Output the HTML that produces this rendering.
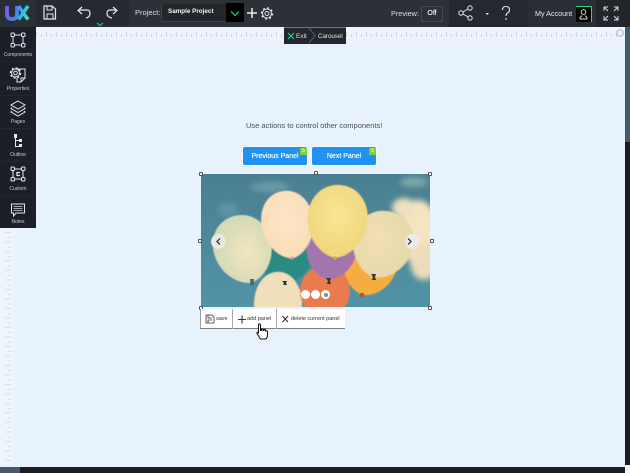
<!DOCTYPE html>
<html>
<head>
<meta charset="utf-8">
<style>
html,body{margin:0;padding:0;width:630px;height:473px;overflow:hidden;background:#e8f2fc;font-family:"Liberation Sans",sans-serif}
.a{position:absolute}
#root{position:relative;width:630px;height:473px;overflow:hidden}
.t{position:absolute;white-space:nowrap}
.side{position:absolute;left:0;width:36px;height:33px;color:#c8ccd0;font-size:5px;text-align:center;border-bottom:1px solid #23272d}
.side span{position:absolute;left:0;right:0;bottom:3px}
.btn{position:absolute;top:147px;height:18px;background:#2093f2;border-radius:2px;color:#fff;font-size:7px;line-height:19px;text-align:center;box-shadow:0 0 0 1px #f4f9ff;text-shadow:0 0 .4px #fff}
.tag{position:absolute;right:0;top:1px;width:7px;height:7px;background:#7fd13b;color:#fff;font-size:5px;line-height:7px;text-shadow:none}
.h{position:absolute;width:2px;height:2px;border:1px solid #555;background:#f4f8fc;border-radius:1px}
</style>
</head>
<body>
<div id="root">
<!-- top bar -->
<div class="a" style="left:0;top:0;width:630px;height:27px;background:#2c3138"></div>
<div class="a" style="left:0;top:0;width:36px;height:27px;background:#2a2f36"></div>
<div class="a" style="left:36px;top:0;width:93px;height:25px;background:#262a30"></div>
<div class="a" style="left:449px;top:0;width:79px;height:27px;background:#25292f"></div>
<div class="a" style="left:528px;top:0;width:68px;height:27px;background:#2a2e35"></div>
<div class="a" style="left:596px;top:0;width:34px;height:27px;background:#22262b"></div>
<svg class="a" style="left:0;top:0" width="630" height="27" fill="none">
 <defs><linearGradient id="ux" gradientUnits="userSpaceOnUse" x1="5" x2="30" y1="8" y2="16"><stop offset="0" stop-color="#8a55e6"/><stop offset=".45" stop-color="#4a7fe8"/><stop offset=".75" stop-color="#35c4e0"/><stop offset="1" stop-color="#3be6a4"/></linearGradient></defs>
 <path d="M7 6V14Q7 19 12 19Q17 19 17 14V6" stroke="url(#ux)" stroke-width="3.800"/>
 <path d="M18.500 6L28 19.500M28 6L18.500 19.500" stroke="url(#ux)" stroke-width="3.600"/>
 <path d="M44 6H52L55.500 9V19H44Z" stroke="#e4e6e8" stroke-width="1.200"/><path d="M47 6V10H52V6M47 19V14H53V19" stroke="#e4e6e8"/>
 <path d="M79 10H87Q90 10 90 13.500Q90 17 86 18" stroke="#e4e6e8" stroke-width="1.200"/><path d="M82 7L78 10.500L82 14" stroke="#e4e6e8" stroke-width="1.200"/>
 <path d="M116 10H110Q107 10 107 13.500Q107 17 112 18" stroke="#e4e6e8" stroke-width="1.200"/><path d="M113 7L117 10.500L113 14" stroke="#e4e6e8" stroke-width="1.200"/>
 <path d="M97 23L100 25.500L103 23" stroke="#1fd18a" stroke-width="1.100"/>
 <path d="M247 13H257M252 8V18" stroke="#eceeef" stroke-width="1.500"/>
 <circle cx="267" cy="13.500" r="2" stroke="#e0e2e4"/><circle cx="267" cy="13.500" r="4.500" stroke="#e0e2e4"/><circle cx="267" cy="13.500" r="5.500" stroke="#e0e2e4" stroke-width="1.400" stroke-dasharray="2 2.300"/>
 <circle cx="461" cy="13" r="2.200" stroke="#e8eaec"/><circle cx="470" cy="8" r="2.200" stroke="#e8eaec"/><circle cx="470" cy="18" r="2.200" stroke="#e8eaec"/><path d="M463 12L468 9M463 14L468 17" stroke="#e8eaec"/>
 <path d="M485.500 13H489L487.200 15Z" fill="#e8eaec"/>
 <path d="M502.500 10Q502.500 6.500 506 6.500Q509.500 6.500 509.500 10Q509.500 12 507.500 13Q506 14 506 16M506 18V20" stroke="#e4e6e8" stroke-width="1.100"/>
 <path d="M604 7V11M604 7H608M604 7L608 11M614 7H618V11M618 7L614 11M604 16V20H608M604 20L608 16M618 16V20H614M618 20L614 16" stroke="#dfe2e4" stroke-width=".9"/>
</svg>
<div class="t" style="left:135px;top:8px;font-size:7.500px;color:#dcdfe2">Project:</div>
<div class="a" style="left:161px;top:4px;width:66px;height:17px;background:#23272c;border-left:1px solid #3c4248;border-bottom:1px solid #3c4248"></div>
<div class="t" style="left:168px;top:8px;font-size:6.300px;font-weight:bold;color:#f2f2f2">Sample Project</div>
<div class="a" style="left:226px;top:3px;width:18px;height:19px;background:#000"></div>
<svg class="a" style="left:226px;top:3px" width="18" height="19" fill="none"><path d="M5 8.500L9 12.500L13 8.500" stroke="#14d98a" stroke-width="1.200"/></svg>
<div class="t" style="left:391px;top:9px;font-size:7.300px;color:#dcdfe2">Preview:</div>
<div class="a" style="left:421px;top:6px;width:20px;height:14px;border:1px solid #41474e;border-radius:2px;color:#e8e8e8;font-size:7px;line-height:14px;text-align:center;text-shadow:0 0 .4px #fff">Off</div>
<div class="t" style="left:535px;top:9px;font-size:7.200px;color:#e8e8e8">My Account</div>
<div class="a" style="left:576px;top:6px;width:15px;height:15px;background:#000;border-top:1px solid #14e08e;border-right:1px solid #14e08e"></div>
<svg class="a" style="left:576px;top:6px" width="16" height="16" fill="none"><circle cx="7.500" cy="6" r="2.300" stroke="#e5e5e5" stroke-width=".9"/><path d="M4 13V11.500L6 9.500M11 13V11.500L9 9.500M4 13H11" stroke="#e5e5e5" stroke-width=".9"/></svg>

<!-- ruler top -->
<div class="a" style="left:36px;top:27px;width:589px;height:12px;background:#edf4fb"></div>
<div class="a" style="left:36px;top:34px;width:589px;height:3px;background:repeating-linear-gradient(90deg,#d0d6db 0 1px,transparent 1px 5px)"></div>
<div class="a" style="left:36px;top:32px;width:589px;height:2px;background:repeating-linear-gradient(90deg,#d0d6db 0 1px,transparent 1px 10px)"></div>
<svg class="a" style="left:615px;top:28px" width="10" height="10"><circle cx="5" cy="5" r="3.200" fill="none" stroke="#bfc4c9" stroke-width="2" stroke-dasharray="1.500 .6"/></svg>
<!-- ruler left -->
<div class="a" style="left:0;top:229px;width:14px;height:236px;background:#eef5fc"></div>
<div class="a" style="left:5px;top:232px;width:6px;height:232px;background:repeating-linear-gradient(180deg,#d8dde1 0 1px,transparent 1px 9.500px)"></div>
<div class="a" style="left:8px;top:237px;width:4px;height:228px;background:repeating-linear-gradient(180deg,#dde1e5 0 1px,transparent 1px 9.500px)"></div>

<!-- side panel -->
<div class="a" style="left:0;top:27px;width:36px;height:201px;background:#1c2026"></div>
<div class="side" style="top:28px">
<svg class="a" style="left:10px;top:4px" width="16" height="16" fill="none" stroke="#e4e6e8" stroke-width="1"><rect x="3" y="3" width="10" height="10"/><rect x="1" y="1" width="3.500" height="3.500" rx="1" fill="#1c2026"/><rect x="11.500" y="1" width="3.500" height="3.500" rx="1" fill="#1c2026"/><rect x="1" y="11.500" width="3.500" height="3.500" rx="1" fill="#1c2026"/><rect x="11.500" y="11.500" width="3.500" height="3.500" rx="1" fill="#1c2026"/></svg>
<span>Components</span></div>
<div class="side" style="top:62px">
<svg class="a" style="left:9px;top:4px" width="18" height="18" fill="none" stroke="#e4e6e8" stroke-width="1"><path d="M8 3H16V12L12 16H8V12"/><path d="M12 16V12H16" /><circle cx="6.500" cy="7" r="1.800"/><circle cx="6.500" cy="7" r="4" fill="none"/><circle cx="6.500" cy="7" r="5" stroke-width="1.500" stroke-dasharray="2 1.900"/></svg>
<span>Properties</span></div>
<div class="side" style="top:95px">
<svg class="a" style="left:9px;top:4px" width="18" height="18" fill="none" stroke="#e4e6e8" stroke-width="1"><path d="M9 2L16 6L9 10L2 6Z"/><path d="M3 8.500L2 9.500L9 13.500L16 9.500L15 8.500"/><path d="M3 12L2 13L9 17L16 13L15 12"/></svg>
<span>Pages</span></div>
<div class="side" style="top:128px">
<svg class="a" style="left:9px;top:4px" width="18" height="18" fill="#e4e6e8"><rect x="5" y="2" width="3" height="4"/><rect x="10" y="7" width="3" height="3"/><rect x="10" y="12" width="3" height="3"/><path d="M6 6h1v8h3v1H6zM7 8h3v1H7z"/></svg>
<span>Outline</span></div>
<div class="side" style="top:162px">
<svg class="a" style="left:10px;top:4px" width="16" height="16" fill="none" stroke="#e4e6e8" stroke-width="1"><rect x="3" y="3" width="10" height="10"/><rect x="1" y="1" width="3.500" height="3.500" rx="1" fill="#1c2026"/><rect x="11.500" y="1" width="3.500" height="3.500" rx="1" fill="#1c2026"/><rect x="1" y="11.500" width="3.500" height="3.500" rx="1" fill="#1c2026"/><rect x="11.500" y="11.500" width="3.500" height="3.500" rx="1" fill="#1c2026"/><path d="M10 6.500H7V9.500H10" stroke-width="1.300"/></svg>
<span>Custom</span></div>
<div class="side" style="top:195px;border-bottom:0">
<svg class="a" style="left:10px;top:7px" width="16" height="16" fill="none" stroke="#e4e6e8" stroke-width="1"><path d="M1.500 2H14.500V11H6L3.500 14V11H1.500Z"/><path d="M3.500 4.500H12.500M3.500 6.500H12.500M3.500 8.500H12.500" stroke="#a6abb0"/></svg>
<span>Notes</span></div>

<!-- Exit / Carousel -->
<div class="a" style="left:284px;top:27px;width:62px;height:17px;background:#22272b;border-top:1px solid #1aa36c;box-sizing:border-box"></div>
<svg class="a" style="left:284px;top:27px" width="40" height="17" fill="none"><path d="M4 6L10 12M10 6L4 12" stroke="#22d88e" stroke-width="1.100"/><path d="M25 1L31 8.500L25 16" stroke="#5b6167"/></svg>
<div class="t" style="left:296px;top:32.500px;font-size:6.500px;color:#dde">Exit</div>
<div class="t" style="left:318px;top:32.500px;font-size:6.200px;color:#e6e8ea">Carousel</div>

<!-- heading -->
<div class="t" style="left:246px;top:120.500px;font-size:7.500px;color:#4a4f55">Use actions to control other components!</div>
<div class="btn" style="left:243px;width:64px">Previous Panel<div class="tag">5</div></div>
<div class="btn" style="left:312px;width:64px">Next Panel<div class="tag">5</div></div>

<!-- image -->
<svg class="a" style="left:201px;top:174px" width="229" height="133" viewBox="201 174 229 133">
<defs>
<filter id="b1" x="-5%" y="-5%" width="110%" height="110%"><feGaussianBlur stdDeviation=".4"/></filter>
<filter id="b6" x="-30%" y="-30%" width="160%" height="160%"><feGaussianBlur stdDeviation="3"/></filter>
<radialGradient id="p" cx=".5" cy=".45" r=".6"><stop offset="0" stop-color="#fde6c8"/><stop offset="1" stop-color="#f9dcb4"/></radialGradient>
<radialGradient id="y" cx=".5" cy=".42" r=".62"><stop offset="0" stop-color="#f9e596"/><stop offset="1" stop-color="#f0d478"/></radialGradient>
<radialGradient id="g" cx=".55" cy=".55" r=".6"><stop offset="0" stop-color="#f1e5bf"/><stop offset="1" stop-color="#cfdab4"/></radialGradient>
<radialGradient id="c" cx=".4" cy=".45" r=".65"><stop offset="0" stop-color="#f3dfb3"/><stop offset="1" stop-color="#e4d8ac"/></radialGradient>
<linearGradient id="sky" x1="0" x2="0" y1="0" y2="1"><stop offset="0" stop-color="#4a7f91"/><stop offset="1" stop-color="#5193a6"/></linearGradient>
</defs>
<rect x="201" y="174" width="229" height="133" fill="url(#sky)"/>
<g filter="url(#b6)"><ellipse cx="418" cy="232" rx="20" ry="32" fill="#f6e3c0"/><ellipse cx="404" cy="208" rx="12" ry="10" fill="#f0dfbf"/><ellipse cx="424" cy="262" rx="14" ry="18" fill="#ecdcb9"/><ellipse cx="270" cy="187" rx="20" ry="5" fill="#6b9aa9"/><ellipse cx="228" cy="210" rx="10" ry="7" fill="#5f94a4"/><ellipse cx="414" cy="182" rx="14" ry="5" fill="#7fa6ab"/></g>
<g filter="url(#b1)">
<path fill="#f5ad41" transform="translate(378 235) rotate(15) scale(27 62)" d="M0 0C.6 0 1 .2 1 .45C1 .75 .5 .97 0 1C-.5 .97 -1 .75 -1 .45C-1 .2 -.6 0 0 0Z"/>
<path fill="#2c8b84" transform="translate(285 230) scale(28 53)" d="M0 0C.6 0 1 .2 1 .45C1 .75 .5 .97 0 1C-.5 .97 -1 .75 -1 .45C-1 .2 -.6 0 0 0Z"/>
<path fill="#f1dfb9" transform="translate(278 272) scale(24 72)" d="M0 0C.6 0 1 .2 1 .45C1 .75 .5 .97 0 1C-.5 .97 -1 .75 -1 .45C-1 .2 -.6 0 0 0Z"/>
<ellipse cx="325" cy="291" rx="25" ry="26" fill="#e87b50"/>
<path fill="#a274ad" transform="translate(335 222) rotate(7) scale(25 58)" d="M0 0C.6 0 1 .2 1 .45C1 .75 .5 .97 0 1C-.5 .97 -1 .75 -1 .45C-1 .2 -.6 0 0 0Z"/>
<path fill="url(#g)" transform="translate(234 216) rotate(-15) scale(29 69)" d="M0 0C.6 0 1 .2 1 .45C1 .75 .5 .97 0 1C-.5 .97 -1 .75 -1 .45C-1 .2 -.6 0 0 0Z"/>
<path fill="url(#c)" transform="translate(392 212) rotate(16) scale(30 68)" d="M0 0C.6 0 1 .2 1 .45C1 .75 .5 .97 0 1C-.5 .97 -1 .75 -1 .45C-1 .2 -.6 0 0 0Z"/>
<path fill="url(#p)" transform="translate(283 191) rotate(-8) scale(26 68)" d="M0 0C.6 0 1 .2 1 .45C1 .75 .5 .97 0 1C-.5 .97 -1 .75 -1 .45C-1 .2 -.6 0 0 0Z"/>
<path fill="url(#y)" transform="translate(340 185) rotate(4) scale(30 73)" d="M0 0C.6 0 1 .2 1 .45C1 .75 .5 .97 0 1C-.5 .97 -1 .75 -1 .45C-1 .2 -.6 0 0 0Z"/>
</g>
<path d="M371 274h5l-1 3l1 3h-4l1-3zM326 278h5l-1 3l1 3h-4l1-3z" fill="#3f3230"/>
<path d="M250 279h4l-.5 3l.5 3h-4l.5-3z" fill="#3f6a68"/><path d="M282 281h5l-1 2l1 2h-4l1-2z" fill="#2f2c38"/>
<circle cx="362" cy="295" r="2.200" fill="#b8503a"/><circle cx="292" cy="258" r="1.500" fill="#e89a7a"/><circle cx="335" cy="258" r="1.800" fill="#e0a830"/>
</svg>
<!-- arrows -->
<div class="a" style="left:211px;top:234px;width:15px;height:15px;border-radius:50%;background:#e9e8e4"></div>
<div class="a" style="left:405px;top:234px;width:15px;height:15px;border-radius:50%;background:#eceaea"></div>
<svg class="a" style="left:211px;top:234px" width="209" height="15" fill="none" stroke="#222" stroke-width="1.200"><path d="M9 4.500L6 7.500L9 10.500M197 4.500L200 7.500L197 10.500"/></svg>
<!-- dots -->
<div class="a" style="left:301px;top:290px;width:9px;height:9px;border-radius:50%;background:#fff"></div>
<div class="a" style="left:311px;top:290px;width:9px;height:9px;border-radius:50%;background:#fff"></div>
<div class="a" style="left:321px;top:290px;width:9px;height:9px;border-radius:50%;background:#fff"></div>
<div class="a" style="left:323.500px;top:292.500px;width:4px;height:4px;border-radius:50%;background:#6f8fa8"></div>
<!-- handles -->
<div class="h" style="left:199px;top:172px"></div><div class="h" style="left:314px;top:171px"></div><div class="h" style="left:428px;top:172px"></div>
<div class="h" style="left:198px;top:239px"></div><div class="h" style="left:430px;top:239px"></div>
<div class="h" style="left:199px;top:306px"></div><div class="h" style="left:428px;top:306px"></div>

<!-- toolbar -->
<div class="a" style="left:200px;top:309px;width:145px;height:20px;background:#fff;border-bottom:1px solid #7c8186;border-left:1px solid #9a9ea3;box-sizing:border-box"></div>
<div class="a" style="left:232px;top:309px;width:1px;height:20px;background:#a5a9ad"></div>
<div class="a" style="left:276px;top:309px;width:1px;height:20px;background:#a5a9ad"></div>
<svg class="a" style="left:200px;top:309px" width="90" height="20" fill="none" stroke="#333"><path d="M6 6H12L14 8V14H6ZM8 6V9H12M8 14V11H12" stroke-width=".8"/><path d="M38 10.500H46M42 6.500V14.500" stroke-width="1.100"/><path d="M82.500 7L88 13M88 7L82.500 13" stroke-width="1.100"/></svg>
<div class="t" style="left:216px;top:316px;font-size:5.500px;color:#333">save</div>
<div class="t" style="left:247px;top:316px;font-size:5.500px;color:#333">add panel</div>
<div class="t" style="left:291px;top:316px;font-size:5.500px;color:#333">delete current panel</div>
<!-- hand cursor -->
<svg class="a" style="left:255px;top:323px" width="14" height="17"><path d="M3.500 2C3.500 .5 5.500 .5 5.500 2V7.500H6.500V6.500C6.500 5.500 8 5.500 8 6.500V7.500H9V7C9 6 10.500 6 10.500 7V8H11C11 7.500 12.500 7.500 12.500 8.500V12C12.500 14 11.500 15.500 11 16H5.500L2 10.500C1.500 9.500 2.500 8.500 3.500 9.800Z" fill="#fff" stroke="#111" stroke-width="1"/></svg>

<!-- scrollbars -->
<div class="a" style="left:625px;top:27px;width:5px;height:115px;background:#46596b"></div>
<div class="a" style="left:625px;top:142px;width:5px;height:323px;background:#1a1d21"></div>
<div class="a" style="left:0;top:467px;width:625px;height:6px;background:#1a1d21"></div>
<div class="a" style="left:0;top:467px;width:20px;height:6px;background:#46596b"></div>
<div class="a" style="left:625px;top:465px;width:5px;height:8px;background:#f1f4f7"></div>
</div>
</body>
</html>
